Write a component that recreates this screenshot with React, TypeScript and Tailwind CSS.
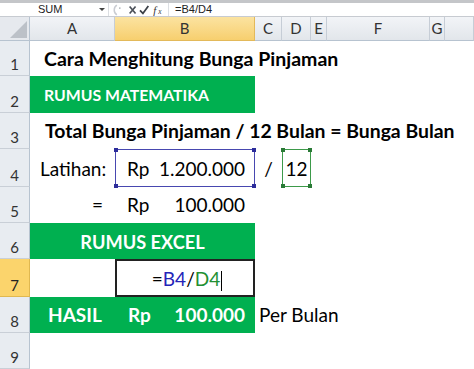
import React from "react";

const cols = "grid grid-cols-[30px_85px_140px_27px_29px_16px_103px_15px_1fr]";

function RowHead({ n, active }: { n: number; active?: boolean }) {
  return (
    <div
      className={
        "flex items-end justify-center pb-[2px] border-b border-r text-[15px] leading-none " +
        (active
          ? "bg-[#fbd46c] border-b-[#e0b850] border-r-[#e0b850] text-[#222]"
          : "bg-[#e8ecf1] border-b-[#c9cfd7] border-r-[#b7c3d0] text-[#333]")
      }
    >
      <span className="mb-[1px]">{n}</span>
    </div>
  );
}

function Handle({ pos, color }: { pos: string; color: string }) {
  return <span className={"absolute w-[4px] h-[4px] " + pos + " " + color} />;
}

export default function App() {
  return (
    <div className="w-[474px] h-[369px] overflow-hidden bg-white font-['Lato','Open_Sans',sans-serif] text-black">
      {/* formula bar */}
      <div className="h-[3px] bg-[#c4c6c9]" />
      <div className="h-[14px] flex items-center bg-white border-b border-[#c7cbd1] text-[11px] text-[#222]">
        <div className="w-[108px] flex items-center">
          <span className="ml-[38px] font-['Liberation_Sans',sans-serif] text-[11px]">SUM</span>
          <span className="ml-auto mr-[3px] w-0 h-0 border-l-[3px] border-r-[3px] border-t-[3px] border-l-transparent border-r-transparent border-t-[#444]" />
        </div>
        <div className="w-[60px] h-full flex items-center border-l border-[#dcdfe3]">
          <svg width="60" height="14" viewBox="0 0 60 14">
            <path d="M8 2 A6 6 0 0 0 8 12" fill="none" stroke="#c9ccd2" strokeWidth="1.5" />
            <circle cx="11" cy="5" r="0.9" fill="#b0b4ba" />
            <path d="M21 3.5 L27 10.5 M27 3.5 L21 10.5" stroke="#4a4f58" strokeWidth="1.7" />
            <path d="M31.5 7.5 L34.5 10.5 L40 3" fill="none" stroke="#3a3f47" strokeWidth="1.8" />
            <text x="45" y="11" fontSize="11" fontStyle="italic" fontFamily="Liberation Serif, serif" fill="#333">f</text>
            <text x="50" y="11.5" fontSize="7.5" fontStyle="italic" fontFamily="Liberation Serif, serif" fill="#333">x</text>
          </svg>
        </div>
        <div className="h-full flex items-center border-l border-[#dcdfe3] pl-[6px] font-['Liberation_Sans',sans-serif] text-[11px]">
          =B4/D4
        </div>
      </div>

      {/* column headers */}
      <div className={cols + " h-[23px] text-[15px] text-[#333]"}>
        <div className="relative bg-[#e6e9ee] border-r border-b border-[#b7c3d0]">
          <svg className="absolute right-[2px] bottom-[2px]" width="17" height="17" viewBox="0 0 17 17">
            <path d="M17 0 L17 17 L0 17 Z" fill="#bcc1c8" />
          </svg>
        </div>
        {[
          ["A", false],
          ["B", true],
          ["C", false],
          ["D", false],
          ["E", false],
          ["F", false],
          ["G", false],
          ["", false],
        ].map(([l, a], i) => (
          <div
            key={i}
            className={
              "flex items-center justify-center border-r border-b " +
              (a
                ? "bg-gradient-to-b from-[#fbe3a0] to-[#f7cf6e] border-r-[#e3b95a] border-b-[#e3b95a]"
                : "bg-gradient-to-b from-[#f2f4f7] to-[#e2e6eb] border-r-[#c6cdd6] border-b-[#b7c3d0]")
            }
          >
            {l as string}
          </div>
        ))}
      </div>

      {/* row 1 */}
      <div className={cols + " h-[36px]"}>
        <RowHead n={1} />
        <div className="col-span-8 flex items-end pb-[8px] pl-[14px] whitespace-nowrap font-bold text-[19.5px] leading-none">
          Cara Menghitung Bunga Pinjaman
        </div>
      </div>

      {/* row 2 */}
      <div className={cols + " h-[37px]"}>
        <RowHead n={2} />
        <div className="col-span-2 bg-[#00b050] flex items-end pb-[10px] pl-[14px] whitespace-nowrap font-bold text-[15.8px] leading-none text-white">
          RUMUS MATEMATIKA
        </div>
      </div>

      {/* row 3 */}
      <div className={cols + " h-[36px]"}>
        <RowHead n={3} />
        <div className="col-span-8 flex items-end pb-[9px] pl-[15px] whitespace-nowrap font-bold text-[19.4px] leading-none">
          Total Bunga Pinjaman / 12 Bulan = Bunga Bulan
        </div>
      </div>

      {/* row 4 */}
      <div className={cols + " h-[38px] text-[19px] leading-none"}>
        <RowHead n={4} />
        <div className="flex items-end pb-[9px] pl-[10px] whitespace-nowrap">Latihan:</div>
        <div className="relative border border-[#4848b0] flex items-end justify-between pb-[8px] pl-[11px] pr-[9px]">
          <span>Rp</span>
          <span>1.200.000</span>
          <Handle pos="-left-[2px] -top-[2px]" color="bg-[#2c2c9a]" />
          <Handle pos="-right-[2px] -top-[2px]" color="bg-[#2c2c9a]" />
          <Handle pos="-left-[2px] -bottom-[2px]" color="bg-[#2c2c9a]" />
          <Handle pos="-right-[2px] -bottom-[2px]" color="bg-[#2c2c9a]" />
        </div>
        <div className="flex items-end justify-center pb-[9px]">/</div>
        <div className="relative border border-[#3d9a4a] flex items-end justify-center pb-[8px]">
          <span>12</span>
          <Handle pos="-left-[2px] -top-[2px]" color="bg-[#2a7a36]" />
          <Handle pos="-right-[2px] -top-[2px]" color="bg-[#2a7a36]" />
          <Handle pos="-left-[2px] -bottom-[2px]" color="bg-[#2a7a36]" />
          <Handle pos="-right-[2px] -bottom-[2px]" color="bg-[#2a7a36]" />
        </div>
      </div>

      {/* row 5 */}
      <div className={cols + " h-[36px] text-[19px] leading-none"}>
        <RowHead n={5} />
        <div className="flex items-end justify-end pb-[9px] pr-[12px]">=</div>
        <div className="flex items-end justify-between pb-[9px] pl-[12px] pr-[10px]">
          <span>Rp</span>
          <span>100.000</span>
        </div>
      </div>

      {/* row 6 */}
      <div className={cols + " h-[36px]"}>
        <RowHead n={6} />
        <div className="col-span-2 bg-[#00b050] flex items-end justify-center pb-[8px] whitespace-nowrap font-bold text-[18.2px] leading-none text-white">
          RUMUS EXCEL
        </div>
      </div>

      {/* row 7 */}
      <div className={cols + " h-[38px] text-[19px] leading-none"}>
        <RowHead n={7} active />
        <div />
        <div className="border-2 border-[#222] flex items-end justify-center pb-[7px] pl-[4px]">
          <span>=</span>
          <span className="text-[#2424b8]">B4</span>
          <span>/</span>
          <span className="text-[#239032]">D4</span>
          <span className="ml-[1px] w-[1px] h-[20px] bg-black self-end mb-[-3px]" />
        </div>
      </div>

      {/* row 8 */}
      <div className={cols + " h-[36px] text-[19px] leading-none"}>
        <RowHead n={8} />
        <div className="bg-[#00b050] flex items-end pb-[9px] pl-[18px] font-bold text-white">HASIL</div>
        <div className="bg-[#00b050] flex items-end justify-between pb-[9px] pl-[13px] pr-[10px] font-bold text-white">
          <span>Rp</span>
          <span>100.000</span>
        </div>
        <div className="col-span-6 flex items-end pb-[9px] pl-[4px] whitespace-nowrap">Per Bulan</div>
      </div>

      {/* row 9 */}
      <div className={cols + " h-[36px]"}>
        <RowHead n={9} />
      </div>
    </div>
  );
}
